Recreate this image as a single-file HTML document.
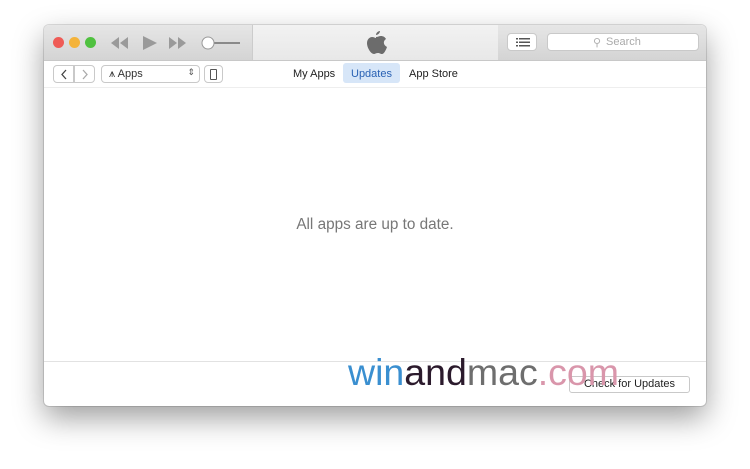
<!DOCTYPE html>
<html><head><style>
body{margin:0;width:750px;height:469px;background:#fff;position:relative;overflow:hidden;font-family:"Liberation Sans",sans-serif}
.win{position:absolute;left:44px;top:25px;width:662px;height:381px;background:#fff;border-radius:5px;box-shadow:0 12px 30px rgba(0,0,0,.38),0 0 0 1px rgba(0,0,0,.12);overflow:hidden}
.tb{position:absolute;left:0;top:0;width:662px;height:35px;border-bottom:1px solid #c8c8c8}
.l{position:absolute;left:0;top:0;width:208px;height:35px;background:linear-gradient(#e6e6e6,#d4d4d4)}
.c{position:absolute;left:208px;top:0;width:245px;height:35px;background:linear-gradient(#f2f2f2,#e8e8e8);border-left:1px solid #ccc;border-right:1px solid #ccc}
.r{position:absolute;left:454px;top:0;width:208px;height:35px;background:linear-gradient(#e6e6e6,#d4d4d4)}
.dot{position:absolute;top:12px;width:11px;height:11px;border-radius:50%}
.btn{position:absolute;background:#fff;border:1px solid #c9c9c9;border-radius:4px;box-sizing:border-box}
.t{position:absolute;font-size:11px;color:#222;top:43px}
</style></head><body>
<div class="win">
<div class="tb">
<div class="l">
<div class="dot" style="left:9px;background:#ef5b56"></div>
<div class="dot" style="left:25px;background:#f4b33a"></div>
<div class="dot" style="left:41px;background:#4fc13f"></div>
<svg style="position:absolute;left:66px;top:11px" width="130" height="14">
<path d="M9 1L1 7L9 13ZM18 1L10 7L18 13Z" fill="#9a9a9a"/>
<path d="M33 0L47 7L33 14Z" fill="#9a9a9a"/>
<path d="M59 1L67 7L59 13ZM68 1L76 7L68 13Z" fill="#9a9a9a"/>
<line x1="98" y1="7" x2="132" y2="7" stroke="#8a8a8a" stroke-width="2"/>
<circle cx="98" cy="7" r="6" fill="#fff" stroke="#999"/>
</svg>
</div>
<div class="c"><svg style="position:absolute;left:112px;top:5px" width="22" height="25" viewBox="0 0 22 25"><path d="M15 1c0 2-2 4-4 4 0-2 2-4 4-4zM11 7c2 0 3-1 5-1 2 0 4 1 5 3-3 2-3 6 1 8-1 3-3 7-5 7-2 0-2-1-4-1-2 0-3 1-4 1-3 0-7-6-7-11 0-4 3-6 5-6 2 0 3 1 4 1z" fill="#6c6c6c"/></svg></div>
<div class="r">
<div class="btn" style="left:9px;top:8px;width:30px;height:18px"><svg style="position:absolute;left:8px;top:4px" width="14" height="9"><g fill="#555"><rect x="0" y="0" width="2" height="1.5"/><rect x="3" y="0" width="11" height="1.5"/><rect x="0" y="3.5" width="2" height="1.5"/><rect x="3" y="3.5" width="11" height="1.5"/><rect x="0" y="7" width="2" height="1.5"/><rect x="3" y="7" width="11" height="1.5"/></g></svg></div>
<div class="btn" style="left:49px;top:8px;width:152px;height:18px;border-radius:4px"><span style="position:absolute;left:45px;top:2px;font-size:11px;color:#b0b0b0">⚲</span><span style="position:absolute;left:58px;top:2px;font-size:11px;color:#aaa">Search</span></div>
</div>
</div>
<div class="btn" style="left:9px;top:40px;width:21px;height:18px;border-radius:4px 0 0 4px"><svg style="position:absolute;left:6px;top:3px" width="8" height="11"><path d="M6 1L2 5.5L6 10" fill="none" stroke="#444" stroke-width="1.3"/></svg></div>
<div class="btn" style="left:30px;top:40px;width:21px;height:18px;border-radius:0 4px 4px 0"><svg style="position:absolute;left:6px;top:3px" width="8" height="11"><path d="M2 1L6 5.5L2 10" fill="none" stroke="#aaa" stroke-width="1.3"/></svg></div>
<div class="btn" style="left:57px;top:40px;width:99px;height:18px"><span style="position:absolute;left:7px;top:2px;font-size:11px;color:#333">⩚ Apps</span><span style="position:absolute;right:4px;top:1px;font-size:9px;color:#555">⇕</span></div>
<div class="btn" style="left:160px;top:40px;width:19px;height:18px"><div style="position:absolute;left:5px;top:3px;width:5px;height:9px;border:1px solid #555;border-radius:1px"></div></div>
<div class="t" style="left:249px">My Apps</div>
<div style="position:absolute;left:299px;top:38px;width:57px;height:20px;background:#d7e6f8;border-radius:3px"></div>
<div class="t" style="left:307px;color:#2a62b4">Updates</div>
<div class="t" style="left:365px">App Store</div>
<div style="position:absolute;left:0;top:62px;width:662px;height:1px;background:#eee"></div>
<div style="position:absolute;left:0;top:191px;width:662px;text-align:center;font-size:15.3px;color:#777">All apps are up to date.</div>
<div style="position:absolute;left:0;top:336px;width:662px;height:1px;background:#e2e2e2"></div>
<div class="btn" style="left:525px;top:351px;width:121px;height:17px;font-size:11px;color:#222;text-align:center;line-height:15px;border-radius:3px">Check for Updates</div>
</div>
<div style="position:absolute;left:348px;top:351px;font-size:37.5px;letter-spacing:0;line-height:42px;white-space:nowrap"><span style="color:#3a8fd0">win</span><span style="color:#2b1a2c">and</span><span style="color:#6e6e6e">mac</span><span style="color:#d996ab">.com</span></div>
</body></html>
